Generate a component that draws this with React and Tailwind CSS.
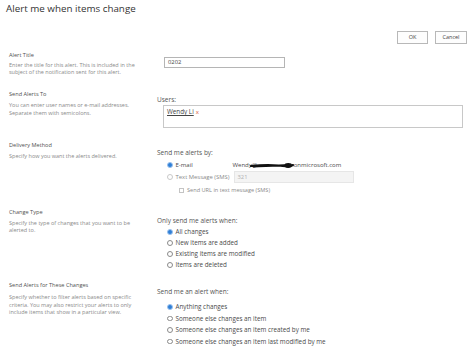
import React from 'react';

const Radio = ({ checked }) =>
  checked ? (
    <span className="w-[5.5px] h-[5.5px] rounded-full bg-[#2f7fd6] border border-[#9cc2ee] shrink-0" />
  ) : (
    <span className="w-[5.5px] h-[5.5px] rounded-full border border-[#8a8a8a] bg-white shrink-0" />
  );

const Option = ({ checked, label, h = 'h-[11px]' }) => (
  <div className={`flex items-center ${h} pl-[10px]`}>
    <Radio checked={checked} />
    <span className="ml-[3px] text-[6.3px] text-[#4a4a4a] whitespace-nowrap">{label}</span>
  </div>
);

const Left = ({ title, children, gap = 'mt-[3px]' }) => (
  <div className="pl-[9px]">
    <div className="text-[5.6px] leading-[8px] text-[#505050]">{title}</div>
    <div className={`${gap} text-[5.5px] leading-[7.5px] text-[#8a8a8a] whitespace-nowrap`}>{children}</div>
  </div>
);

const App = () => {
  return (
    <div
      className="w-[474px] h-[347px] overflow-hidden bg-white flex flex-col"
      style={{ fontFamily: '"Segoe UI", "Open Sans", "Noto Sans", sans-serif' }}
    >
      <div className="pt-[3px] pl-[6px] text-[9.8px] leading-[12px] text-[#333]">Alert me when items change</div>

      <div className="flex justify-end gap-[7px] pr-[7px] mt-[16px]">
        <button className="w-[31px] h-[13px] border border-[#b8b8b8] bg-[#fdfdfd] text-[5.5px] text-[#444]">OK</button>
        <button className="w-[32px] h-[13px] border border-[#b8b8b8] bg-[#fdfdfd] text-[5.5px] text-[#444]">Cancel</button>
      </div>

      {/* Alert Title */}
      <div className="grid grid-cols-[148px_1fr] h-[41px] mt-[6.5px]">
        <Left title="Alert Title">
          Enter the title for this alert. This is included in the
          <br />
          subject of the notification sent for this alert.
        </Left>
        <div className="pt-[6px] pl-[16px]">
          <div className="w-[121px] h-[11px] border border-[#b5b5b5] flex items-center pl-[3px] text-[5.8px] text-[#444]">0202</div>
        </div>
      </div>

      {/* Send Alerts To */}
      <div className="grid grid-cols-[148px_1fr] h-[53px]">
        <Left title="Send Alerts To" gap="mt-[4px]">
          You can enter user names or e-mail addresses.
          <br />
          Separate them with semicolons.
        </Left>
        <div className="pt-[6px] pl-[9px]">
          <div className="text-[6.5px] leading-[8px] text-[#555]">Users:</div>
          <div className="ml-[6px] mt-[1px] w-[300px] h-[23px] border border-[#c8c8c8] pt-[2px] pl-[3px] text-[6.3px] leading-[8px]">
            <span className="text-[#444] underline">Wendy Li</span>
            <span className="ml-[2px] text-[6px] text-[#d9542b]">x</span>
          </div>
        </div>
      </div>

      {/* Delivery Method */}
      <div className="grid grid-cols-[148px_1fr] h-[69px]">
        <Left title="Delivery Method" gap="mt-[4px]">
          Specify how you want the alerts delivered.
        </Left>
        <div className="pt-[8px] pl-[9px]">
          <div className="text-[6.5px] leading-[8px] text-[#555]">Send me alerts by:</div>
          <div className="flex items-center h-[12px] mt-[2px] pl-[10px]">
            <Radio checked />
            <span className="ml-[3px] w-[57px] text-[6px] text-[#4a4a4a]">E-mail</span>
            <span className="text-[6px] text-[#4a4a4a]">Wendy@</span>
            <svg width="44" height="7" viewBox="0 0 46 7" className="-ml-[7px]">
              <path d="M1 4 C10 3, 20 2.5, 30 3.5 S40 5 45 3 M4 4.5 C15 4, 28 4, 40 3" stroke="#111" strokeWidth="2.2" fill="none" strokeLinecap="round" />
              <ellipse cx="40" cy="3.5" rx="4" ry="2.6" fill="#111" />
            </svg>
            <span className="-ml-[2px] text-[6px] text-[#4a4a4a]">.onmicrosoft.com</span>
          </div>
          <div className="flex items-center h-[12px] pl-[10px]">
            <span className="w-[5.5px] h-[5.5px] rounded-full border border-[#c9c9c9] shrink-0" />
            <span className="ml-[3px] w-[58px] text-[5.9px] text-[#8a8a8a] whitespace-nowrap">Text Message (SMS)</span>
            <div className="w-[120px] h-[12px] bg-[#f4f4f4] border border-[#e6e6e6] flex items-center pl-[3px] text-[5.8px] text-[#b0b0b0]">321</div>
          </div>
          <div className="flex items-center h-[12px] mt-[1px] pl-[22px]">
            <span className="w-[5px] h-[5px] border border-[#c4c4c4] shrink-0" />
            <span className="ml-[3px] text-[5.6px] text-[#8a8a8a]">Send URL in text message (SMS)</span>
          </div>
        </div>
      </div>

      {/* Change Type */}
      <div className="grid grid-cols-[148px_1fr] h-[76px]">
        <Left title="Change Type" gap="mt-[4px]">
          Specify the type of changes that you want to be
          <br />
          alerted to.
        </Left>
        <div className="pt-[9px] pl-[9px]">
          <div className="text-[6.5px] leading-[8px] text-[#555]">Only send me alerts when:</div>
          <div className="mt-[2px]">
            <Option checked label="All changes" />
            <Option label="New items are added" />
            <Option label="Existing items are modified" />
            <Option label="Items are deleted" />
          </div>
        </div>
      </div>

      {/* Send Alerts for These Changes */}
      <div className="grid grid-cols-[148px_1fr] flex-1">
        <Left title="Send Alerts for These Changes" gap="mt-[5px]">
          Specify whether to filter alerts based on specific
          <br />
          criteria. You may also restrict your alerts to only
          <br />
          include items that show in a particular view.
        </Left>
        <div className="pt-[7px] pl-[9px]">
          <div className="text-[6.5px] leading-[8px] text-[#555]">Send me an alert when:</div>
          <div className="mt-[5px]">
            <Option checked label="Anything changes" h="h-[11.5px]" />
            <Option label="Someone else changes an item" h="h-[11.5px]" />
            <Option label="Someone else changes an item created by me" h="h-[11.5px]" />
            <Option label="Someone else changes an item last modified by me" h="h-[11.5px]" />
          </div>
        </div>
      </div>
    </div>
  );
};

export default App;
